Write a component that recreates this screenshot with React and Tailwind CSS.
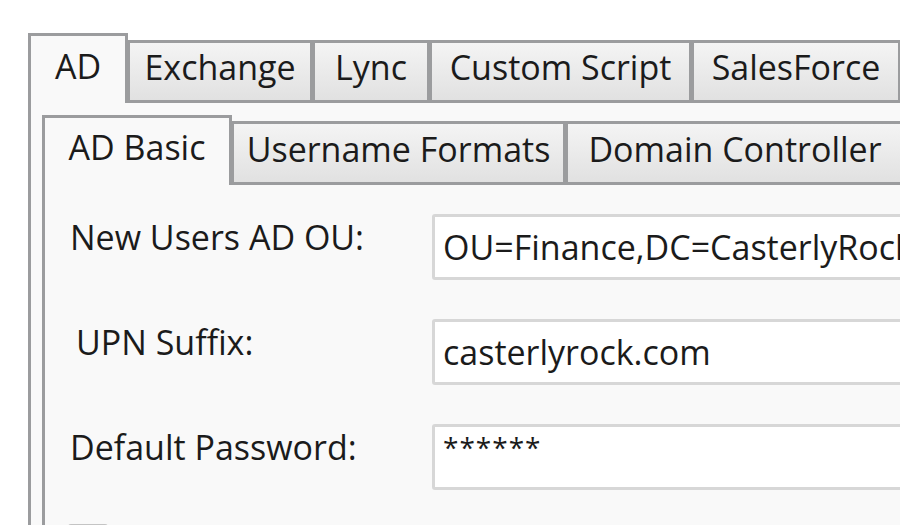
const outerTabs = [
  { label: "Exchange", w: "w-[186px]" },
  { label: "Lync", w: "w-[118px]" },
  { label: "Custom Script", w: "w-[263px]" },
  { label: "SalesForce", w: "w-[210px]" },
];

const innerTabs = [
  { label: "Username Formats", w: "w-[335px]" },
  { label: "Domain Controller", w: "w-[340px]" },
];

function FieldRow({ label, children, labelClass = "", top = false }) {
  return (
    <div className="flex items-start">
      <div className={`w-[362px] shrink-0 pt-[1px] leading-[45px] ${labelClass}`}>{label}</div>
      <div
        className={`h-[66px] w-[520px] shrink-0 rounded-[3px] border-[3px] border-[#d7d7d7] bg-white px-[8px] leading-[45px] flex ${
          top ? "items-start" : "items-center"
        }`}
      >
        {children}
      </div>
    </div>
  );
}

export default function App() {
  return (
    <div className="w-[900px] h-[525px] overflow-hidden bg-white pt-[33px] pl-[28px] font-['Open_Sans',sans-serif] text-[34px] text-[#1b1b1b]">
      {/* outer tab strip */}
      <div className="flex items-end">
        <div className="relative z-10 -mb-[3px] flex h-[70px] w-[100px] shrink-0 items-center justify-center border-[3px] border-b-0 border-[#9b9c9e] bg-[#f9f9f9] pb-[6px]">
          AD
        </div>
        {outerTabs.map((t) => (
          <div
            key={t.label}
            className={`${t.w} -ml-px flex h-[60px] shrink-0 items-center justify-center whitespace-nowrap border-[3px] border-b-0 border-[#9b9c9e] bg-gradient-to-b from-[#f4f4f4] to-[#e1e1e1] pb-[8px]`}
          >
            {t.label}
          </div>
        ))}
      </div>

      {/* outer panel */}
      <div className="h-[500px] border-l-[3px] border-t-[3px] border-[#9b9c9e] bg-[#f9f9f9] pl-[11px] pt-[12px]">
        {/* inner tab strip */}
        <div className="flex items-end">
          <div className="relative z-10 -mb-[3px] flex h-[70px] w-[190px] shrink-0 items-center justify-center border-[3px] border-b-0 border-[#9b9c9e] bg-[#f9f9f9] pb-[8px]">
            AD Basic
          </div>
          {innerTabs.map((t) => (
            <div
              key={t.label}
              className={`${t.w} -ml-px flex h-[61px] shrink-0 items-center justify-center whitespace-nowrap border-[3px] border-b-0 border-[#9b9c9e] bg-gradient-to-b from-[#f4f4f4] to-[#e1e1e1] pb-[8px]`}
            >
              {t.label}
            </div>
          ))}
        </div>

        {/* inner panel */}
        <div className="h-[400px] border-l-[3px] border-t-[3px] border-[#9b9c9e] bg-[#f9f9f9] pl-[25px] pt-[29px]">
          <div className="flex flex-col gap-[39px]">
            <FieldRow label="New Users AD OU:">
              <span className="whitespace-nowrap">OU=Finance,DC=CasterlyRock,DC=com</span>
            </FieldRow>
            <FieldRow label="UPN Suffix:" labelClass="pl-[6px]">
              <span className="whitespace-nowrap">casterlyrock.com</span>
            </FieldRow>
            <FieldRow label="Default Password:" top>
              <span className="whitespace-nowrap text-[28px] tracking-[1px] leading-[40px]">******</span>
            </FieldRow>
          </div>
          <div className="mt-[34px] -ml-[2px] h-[40px] w-[40px] rounded-[3px] border-[3px] border-[#c4c4c4] bg-white" />
        </div>
      </div>
    </div>
  );
}
